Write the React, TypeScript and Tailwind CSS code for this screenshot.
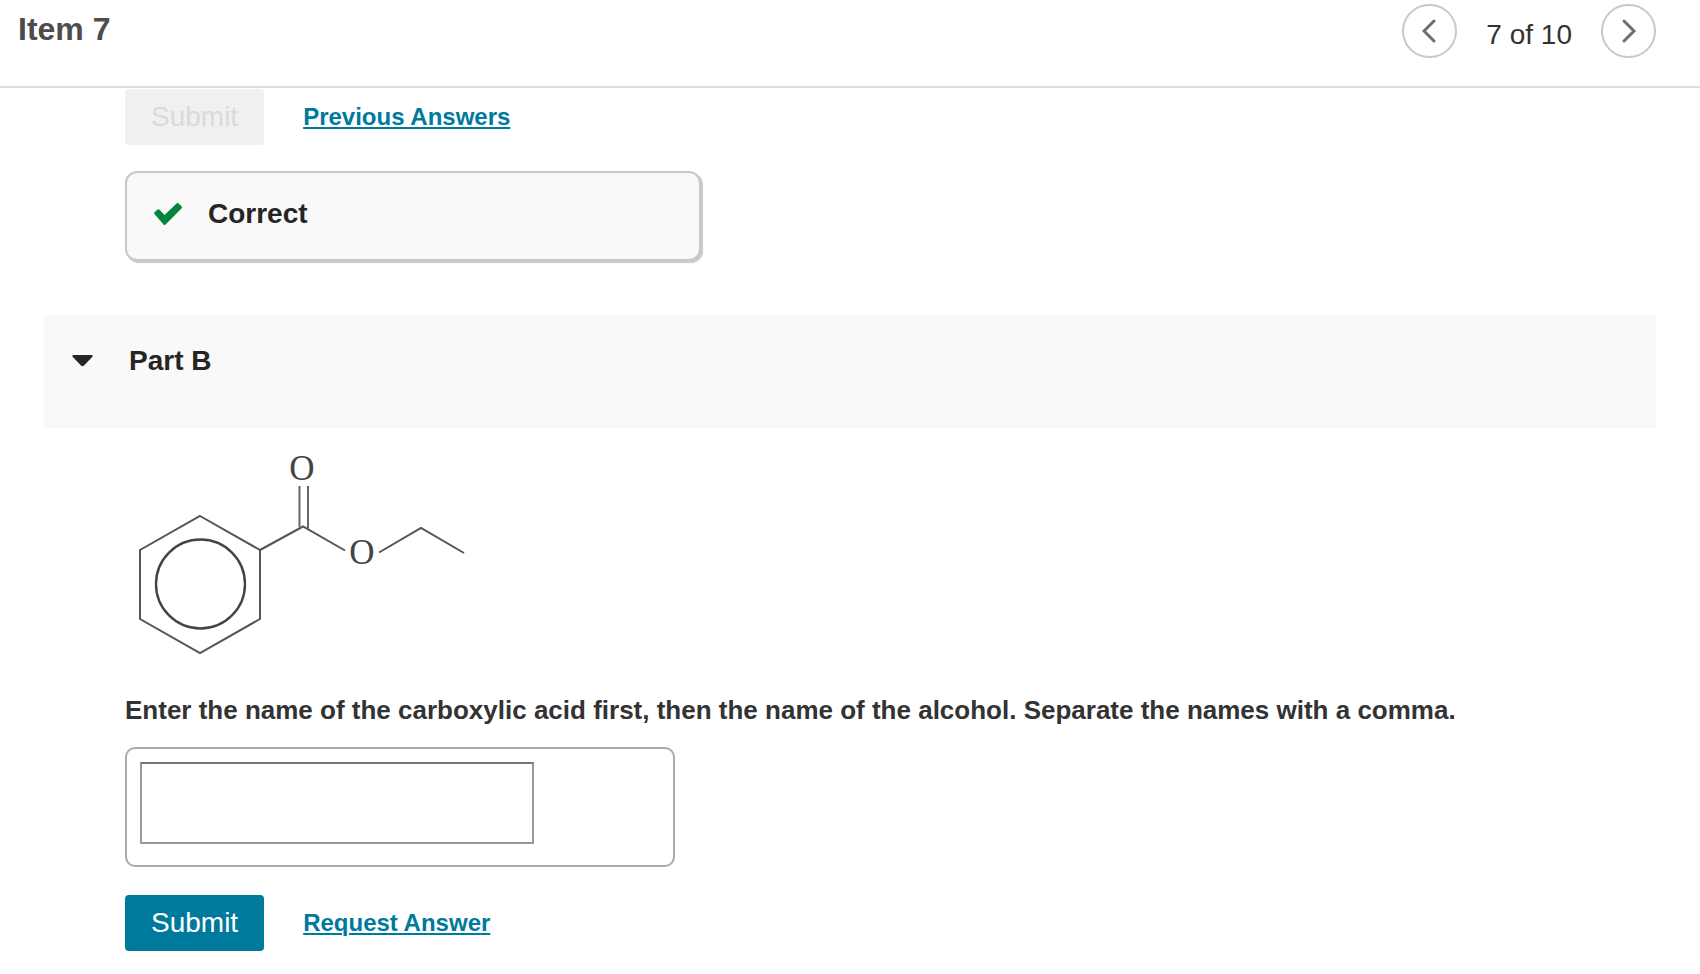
import React from 'react';

interface NavButtonProps {
  label: string;
  points: string;
}

const NavButton = ({ label, points }: NavButtonProps) => (
  <button
    type="button"
    aria-label={label}
    className="flex h-[54px] w-[55px] items-center justify-center rounded-full border-2 border-[#c8c8c8]"
  >
    <svg width="16" height="26" viewBox="0 0 16 26" fill="none" stroke="#6a7070" strokeWidth="3">
      <polyline points={points} strokeLinecap="round" />
    </svg>
  </button>
);

interface ActionRowProps {
  link: string;
  disabled?: boolean;
}

const ActionRow = ({ link, disabled = false }: ActionRowProps) => (
  <div className="flex items-center gap-[39px]">
    <button
      type="submit"
      disabled={disabled}
      className="h-14 rounded bg-[#007a9c] px-[26px] text-[28px] leading-8 text-white disabled:bg-[#f0f0f0] disabled:text-[#dadada]"
    >
      Submit
    </button>
    <a
      href="#"
      className="text-2xl leading-7 font-bold text-[#007a9c] underline decoration-2 underline-offset-2"
    >
      {link}
    </a>
  </div>
);

const CheckMark = () => (
  <svg width="28" height="22" viewBox="0 0 28 22" fill="#00863c" stroke="#00863c" strokeWidth="3" strokeLinejoin="round">
    <path d="M1.8 10.2L4.4 7.8L10.5 14L23.6 1.6L26.4 4.4L10.5 20.4Z" />
  </svg>
);

// Ethyl benzoate
const Molecule = () => (
  <svg
    width="350"
    height="230"
    viewBox="125 434 350 230"
    fill="none"
    stroke="#555"
    strokeWidth="2"
    role="img"
    aria-label="Structure of the ester"
  >
    <polygon points="200,517 260,551 260,620 200,654 140,620 140,551" />
    <circle cx="200.5" cy="585" r="44.5" stroke="#444" strokeWidth="2.4" />
    <polyline points="260,551 303,527.5 345,551.5" />
    <path d="M299.5 487V528M308 487V530" stroke="#666" />
    <polyline points="379,553.5 421,529 464,554" />
    <g fill="#444" stroke="none" fontSize="35" textAnchor="middle" className="font-['Liberation_Serif',serif]">
      <text x="302" y="481">O</text>
      <text x="362" y="565">O</text>
    </g>
  </svg>
);

export default function App() {
  return (
    <div className="min-h-screen bg-white font-['Liberation_Sans',Arial,sans-serif] text-[#252525]">
      {/* Header */}
      <header className="flex h-[88px] items-start justify-between border-b-2 border-[#dedede] pr-11 pl-[18px]">
        <h1 className="pt-[9px] text-[32px] leading-10 font-bold text-[#4d4d4d]">Item 7</h1>
        <nav className="flex items-center gap-[29px] pt-1">
          <NavButton label="Previous item" points="12,3 2,13 12,23" />
          <span className="pt-2 text-[28px] leading-8 text-[#333]">7 of 10</span>
          <NavButton label="Next item" points="3,3 13,13 3,23" />
        </nav>
      </header>

      <main className="px-11">
        {/* Part A */}
        <section className="px-[81px] pt-px">
          <ActionRow link="Previous Answers" disabled />
          <div className="mt-[26px] flex h-[90px] max-w-[576px] items-center gap-[26px] rounded-xl border-2 border-[#c8c8c8] bg-[#f9f9f9] pb-1 pl-[27px] shadow-[2px_2px_1px_#c8c8c8]">
            <CheckMark />
            <span className="text-[28px] leading-8 font-bold">Correct</span>
          </div>
        </section>

        {/* Part B */}
        <section className="mt-[54px]">
          <h2 className="h-[113px] bg-[#f9f9f9] pt-[30px] pl-7">
            <button type="button" aria-expanded="true" className="flex items-center gap-9 text-[28px] leading-8 font-bold">
              <svg width="21" height="12" viewBox="0 0 21 12" fill="currentColor">
                <path d="M1.2 0H19.8Q21.4 .6 20.2 2L12 10.6Q10.5 12 9 10.6L.8 2Q-.4 .6 1.2 0Z" />
              </svg>
              Part B
            </button>
          </h2>
          <form className="px-[81px] pt-[5px]" onSubmit={(e) => e.preventDefault()}>
            <Molecule />
            <label htmlFor="answer" className="mt-8 block text-[26px] leading-[30px] font-bold text-[#333]">
              Enter the name of the carboxylic acid first, then the name of the alcohol. Separate the names with a comma.
            </label>
            <div className="mt-[22px] mb-7 h-[120px] max-w-[550px] rounded-[10px] border-2 border-[#aaa] p-[13px]">
              <input
                id="answer"
                type="text"
                className="block h-[82px] w-[394px] border-2 border-[#999] border-t-[#767676] px-3 text-[28px]"
              />
            </div>
            <ActionRow link="Request Answer" />
          </form>
        </section>
      </main>
    </div>
  );
}
